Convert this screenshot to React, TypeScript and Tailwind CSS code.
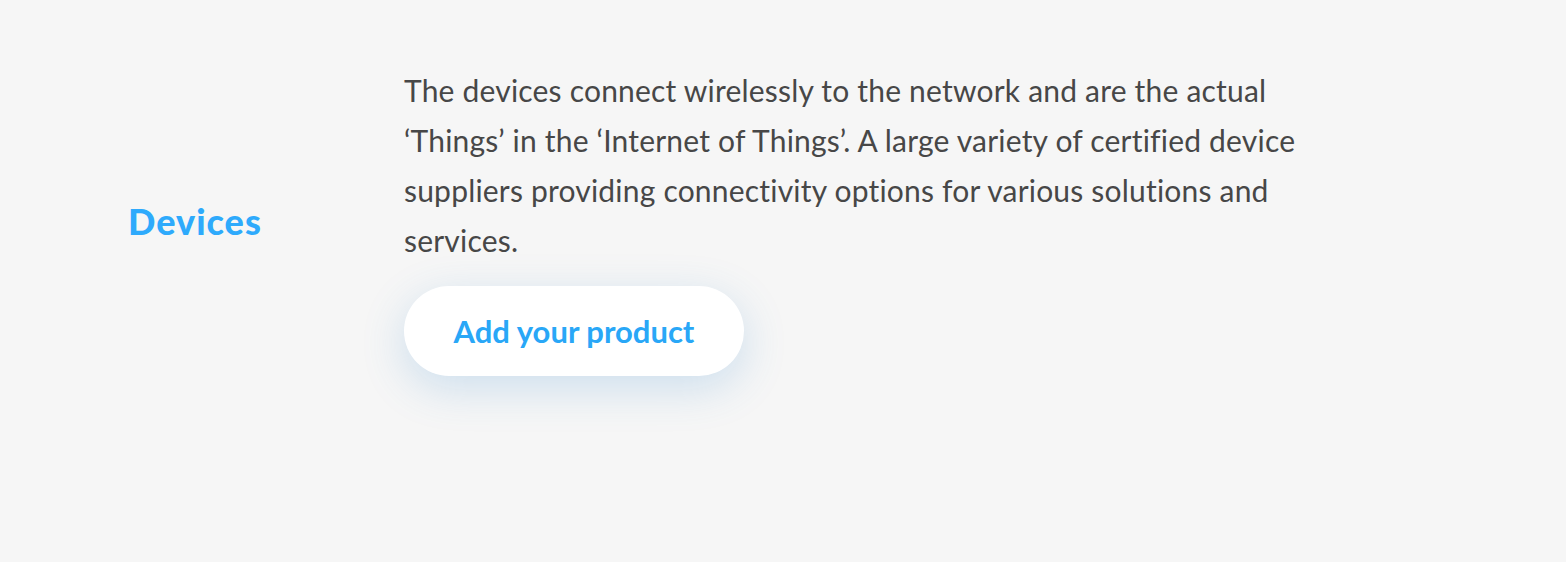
export default function App() {
  return (
    <div
      className="h-[562px] w-full bg-[#f6f6f6] pt-[65px]"
      style={{ fontFamily: "Lato, 'Open Sans', sans-serif" }}
    >
      <section className="flex items-center pl-[128px]">
        {/* Label */}
        <div className="w-[276px] shrink-0">
          <h2 className="text-[36px] font-black leading-none tracking-[1px] text-[#2eaafc]">
            Devices
          </h2>
        </div>

        {/* Content */}
        <div className="w-[1000px]">
          <p className="text-[30px] leading-[50px] tracking-[0.2px] text-[#474747] [font-variant-ligatures:none]">
            The devices connect wirelessly to the network and are the actual
            <br />
            ‘Things’ in the ‘Internet of Things’. A large variety of certified device
            <br />
            suppliers providing connectivity options for various solutions and
            <br />
            services.
          </p>
          <button className="mt-[21px] flex h-[90px] w-[340px] items-center justify-center rounded-full bg-white text-[31px] font-bold text-[#29a7f7] shadow-[0_12px_44px_rgba(60,140,210,0.22)]">
            Add your product
          </button>
        </div>
      </section>
    </div>
  );
}
